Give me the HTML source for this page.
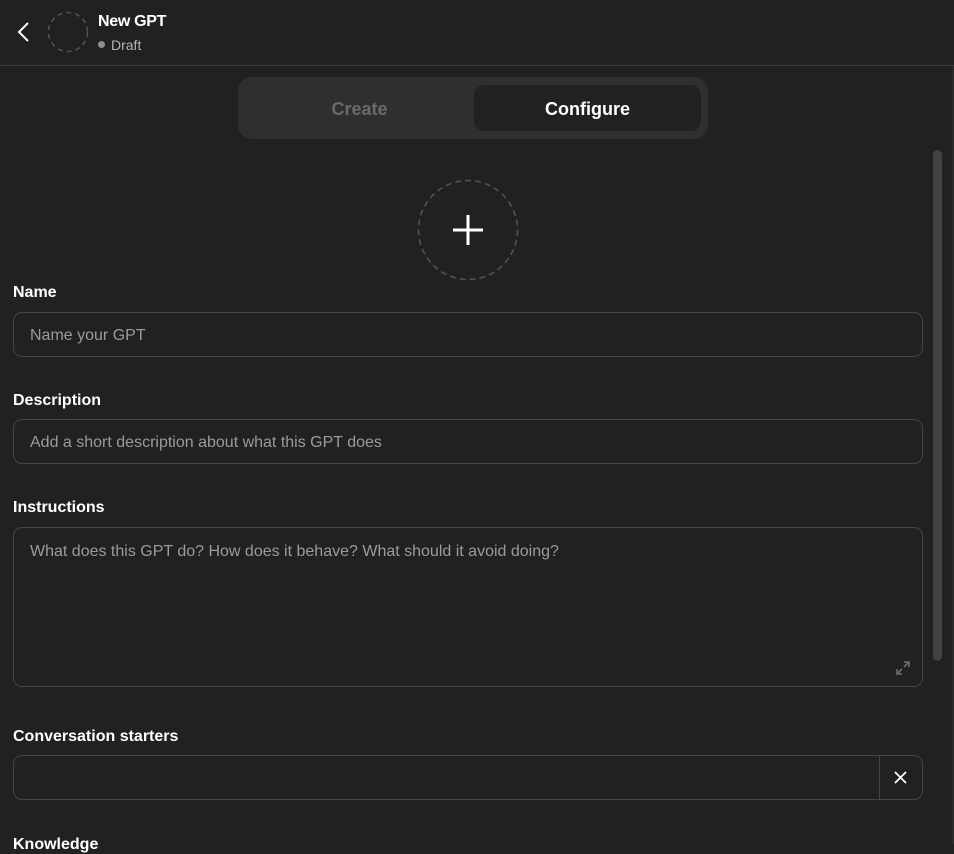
<!DOCTYPE html>
<html><head><meta charset="utf-8"><style>
*{box-sizing:border-box;margin:0;padding:0}
body{width:954px;height:844px;background:#212121;font-family:"Liberation Sans",sans-serif;color:#ececec;position:relative;overflow:hidden}
.abs{position:absolute}
.lbl{position:absolute;left:13px;font-size:16px;font-weight:bold;color:#fff}
.inp{position:absolute;left:13px;width:910px;border:1px solid #444;border-radius:9px;font-size:16px;color:#9b9b9b;padding-left:16px}
</style></head><body>
<div class="abs" style="left:0;top:0;width:954px;height:66px;border-bottom:1px solid #3d3d3d"></div>
<svg class="abs" style="left:14px;top:20px" width="18" height="24" viewBox="0 0 18 24"><path d="M14 3 L5 12 L14 21" stroke="#fff" stroke-width="2" fill="none"/></svg>
<svg class="abs" style="left:47px;top:11px" width="42" height="42"><circle cx="21" cy="21" r="19.5" stroke="#555" stroke-width="1.5" fill="none" stroke-dasharray="5 4"/></svg>
<div class="abs" style="left:98px;top:13px;font-size:16px;font-weight:bold;color:#fff;letter-spacing:-0.3px">New GPT</div>
<div class="abs" style="left:98px;top:41px;width:7px;height:7px;border-radius:50%;background:#8e8e8e"></div>
<div class="abs" style="left:111px;top:37px;font-size:14px;color:#b4b4b4">Draft</div>
<div class="abs" style="left:238px;top:77px;width:470px;height:62px;border-radius:14px;background:#2f2f2f"></div>
<div class="abs" style="left:474px;top:85px;width:227px;height:46px;border-radius:10px;background:#212121"></div>
<div class="abs" style="left:238px;top:99px;width:243px;text-align:center;font-size:18px;color:#6a6a6a;font-weight:bold">Create</div>
<div class="abs" style="left:474px;top:99px;width:227px;text-align:center;font-size:18px;color:#fff;font-weight:bold">Configure</div>
<div class="abs" style="left:933px;top:150px;width:9px;height:511px;border-radius:5px;background:#424242"></div>
<div class="abs" style="left:952px;top:66px;width:2px;height:778px;background:#2a2a2a"></div>
<svg class="abs" style="left:417px;top:179px" width="102" height="102"><circle cx="51" cy="51" r="49.5" stroke="#555" stroke-width="1.5" fill="none" stroke-dasharray="6 4"/><path d="M51 36V66M36 51H66" stroke="#fff" stroke-width="3"/></svg>
<div class="lbl" style="top:284px">Name</div>
<div class="inp" style="top:312px;height:45px;line-height:45px">Name your GPT</div>
<div class="lbl" style="top:392px">Description</div>
<div class="inp" style="top:419px;height:45px;line-height:45px">Add a short description about what this GPT does</div>
<div class="lbl" style="top:499px">Instructions</div>
<div class="inp" style="top:527px;height:160px;padding-top:15px">What does this GPT do? How does it behave? What should it avoid doing?</div>
<svg class="abs" style="left:895px;top:660px" width="16" height="16" viewBox="0 0 16 16"><path d="M9 2H14V7M14 2L9 7M7 14H2V9M2 14L7 9" stroke="#6e6e6e" stroke-width="1.6" fill="none"/></svg>
<div class="lbl" style="top:728px">Conversation starters</div>
<div class="inp" style="top:755px;height:45px"></div>
<div class="abs" style="left:879px;top:756px;width:1px;height:43px;background:#444"></div>
<svg class="abs" style="left:893px;top:770px" width="15" height="15"><path d="M2 2L13 13M13 2L2 13" stroke="#fff" stroke-width="1.8"/></svg>
<div class="lbl" style="top:836px">Knowledge</div>
</body></html>
